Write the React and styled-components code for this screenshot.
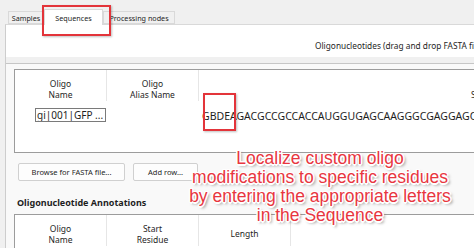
import React from "react";
import styled, { createGlobalStyle } from "styled-components";

const GlobalStyle = createGlobalStyle`
  html, body {
    margin: 0;
    padding: 0;
    background: #f0f0f0;
    overflow: hidden;
  }
  body {
    font-family: "Noto Sans", "DejaVu Sans", sans-serif;
    color: #1e1e1e;
  }
`;

const Window = styled.div`
  position: relative;
  width: 474px;
  height: 248px;
  overflow: hidden;
  display: flex;
  flex-direction: column;
`;

const TabStrip = styled.div`
  height: 24px;
  display: flex;
  align-items: flex-end;
  padding-left: 8px;
  flex-shrink: 0;
`;

const Tab = styled.div`
  width: ${(p) => p.$w}px;
  height: ${(p) => (p.$active ? 16 : 13)}px;
  box-sizing: border-box;
  display: flex;
  align-items: center;
  justify-content: center;
  font-size: 7.2px;
  background: ${(p) => (p.$active ? "#ffffff" : "#f0f0f0")};
  border: 1px solid #d9d9d9;
  border-bottom: ${(p) => (p.$active ? "none" : "1px solid #d9d9d9")};
  margin-bottom: ${(p) => (p.$active ? -1 : 0)}px;
  position: relative;
  z-index: ${(p) => (p.$active ? 1 : 0)};
  padding-top: ${(p) => (p.$active ? 0 : 1)}px;
`;

const Panel = styled.div`
  flex: 1;
  margin-left: 5px;
  border-left: 1px solid #cdcdcd;
  border-top: 1px solid #d9d9d9;
  background: #ffffff;
  display: flex;
  flex-direction: column;
`;

const TitleBar = styled.div`
  height: 32px;
  box-sizing: border-box;
  padding: 16px 0 0 309px;
  font-size: 8.3px;
  line-height: 10px;
  white-space: nowrap;
  overflow: hidden;
`;

const Band = styled.div`
  height: 6px;
  background: #f0f0f0;
  border-bottom: 1px solid #c6c6c6;
`;

const Content = styled.div`
  flex: 1;
  background: #f9f9f9;
  padding: 5px 0 0 8px;
  display: flex;
  flex-direction: column;
  align-items: flex-start;
`;

const Table = styled.div`
  width: 480px;
  height: ${(p) => p.$h}px;
  flex-shrink: 0;
  box-sizing: border-box;
  background: #ffffff;
  border: 1px solid #9c9c9c;
  border-right: none;
  display: grid;
  grid-template-columns: 92px 92px 92px 1fr;
  grid-template-rows: 31px 1fr;
`;

const HeadCell = styled.div`
  border-right: ${(p) => (p.$last ? "none" : "1px solid #e6e6e6")};
  padding-top: ${(p) => p.$top ?? 8}px;
  padding-left: ${(p) => p.$pad ?? 0}px;
  text-align: ${(p) => (p.$pad ? "left" : "center")};
  font-size: 8.5px;
  line-height: 11px;
  white-space: nowrap;
  grid-column: ${(p) => p.$span || "auto"};
`;

const RowCell = styled.div`
  display: flex;
  align-items: flex-start;
  padding-top: ${(p) => p.$top}px;
  padding-left: ${(p) => p.$left}px;
  grid-column: ${(p) => p.$span || "auto"};
`;

const NameInput = styled.div`
  width: 71px;
  height: 14px;
  box-sizing: border-box;
  border: 1px solid #7a7a7a;
  background: #fff;
  font-size: 10px;
  line-height: 12px;
  padding-left: 1px;
  white-space: nowrap;
  overflow: hidden;
`;

const Sequence = styled.div`
  font-size: 10.5px;
  line-height: 14px;
  white-space: nowrap;
`;

const ButtonRow = styled.div`
  display: flex;
  gap: 8px;
  margin: 10px 0 0 4px;
`;

const Button = styled.div`
  width: ${(p) => p.$w}px;
  height: 18px;
  box-sizing: border-box;
  background: #fdfdfd;
  border: 1px solid #d0d0d0;
  border-radius: 2px;
  display: flex;
  align-items: center;
  justify-content: center;
  font-size: 7.5px;
`;

const SectionLabel = styled.div`
  margin: 16px 0 0 3px;
  font-size: 9px;
  font-weight: 700;
  line-height: 12px;
  white-space: nowrap;
`;

const Spacer = styled.div`
  height: 5px;
`;

const Highlight = styled.div`
  position: absolute;
  left: ${(p) => p.$x}px;
  top: ${(p) => p.$y}px;
  width: ${(p) => p.$w}px;
  height: ${(p) => p.$h}px;
  box-sizing: border-box;
  border: 2px solid #e3343a;
  box-shadow: 1px 1px 2px rgba(0, 0, 0, 0.25);
  z-index: 5;
`;

const Callout = styled.div`
  position: absolute;
  left: 170px;
  top: 149px;
  width: 300px;
  text-align: center;
  font-family: "Liberation Sans", Arial, sans-serif;
  font-size: 17.5px;
  line-height: 19px;
  color: #e8363f;
  white-space: nowrap;
  z-index: 6;
  text-shadow:
    1.5px 0 0 #fff, -1.5px 0 0 #fff, 0 1.5px 0 #fff, 0 -1.5px 0 #fff,
    1px 1px 0 #fff, -1px -1px 0 #fff, 1px -1px 0 #fff, -1px 1px 0 #fff,
    2px 2px 3px rgba(0, 0, 0, 0.55);
`;

export default function App() {
  return (
    <Window>
      <GlobalStyle />
      <TabStrip>
        <Tab $w={36}>Samples</Tab>
        <Tab $w={59} $active>
          Sequences
        </Tab>
        <Tab $w={72}>Processing nodes</Tab>
      </TabStrip>
      <Panel>
        <TitleBar>Oligonucleotides (drag and drop FASTA files here)</TitleBar>
        <Band />
        <Content>
          <Table $h={84}>
            <HeadCell>
              Oligo
              <br />
              Name
            </HeadCell>
            <HeadCell>
              Oligo
              <br />
              Alias Name
            </HeadCell>
            <HeadCell $span="3 / 5" $pad={272} $last>
              <br />
              Sequence
            </HeadCell>
            <RowCell $top={7} $left={20}>
              <NameInput>gi|001|GFP ...</NameInput>
            </RowCell>
            <RowCell />
            <RowCell $span="3 / 5" $top={8} $left={3}>
              <Sequence>GBDEAGACGCCGCCACCAUGGUGAGCAAGGGCGAGGAGCUGUUCACCG</Sequence>
            </RowCell>
          </Table>
          <ButtonRow>
            <Button $w={107}>Browse for FASTA file...</Button>
            <Button $w={65}>Add row...</Button>
          </ButtonRow>
          <SectionLabel>Oligonucleotide Annotations</SectionLabel>
          <Spacer />
          <Table $h={60}>
            <HeadCell>
              Oligo
              <br />
              Name
            </HeadCell>
            <HeadCell>
              Start
              <br />
              Residue
            </HeadCell>
            <HeadCell $top={13}>Length</HeadCell>
            <HeadCell $last />
          </Table>
        </Content>
      </Panel>
      <Highlight $x={42} $y={5} $w={69} $h={31} />
      <Highlight $x={203} $y={93} $w={33} $h={38} />
      <Callout>
        Localize custom oligo
        <br />
        modifications to specific residues
        <br />
        by entering the appropriate letters
        <br />
        in the Sequence
      </Callout>
    </Window>
  );
}
